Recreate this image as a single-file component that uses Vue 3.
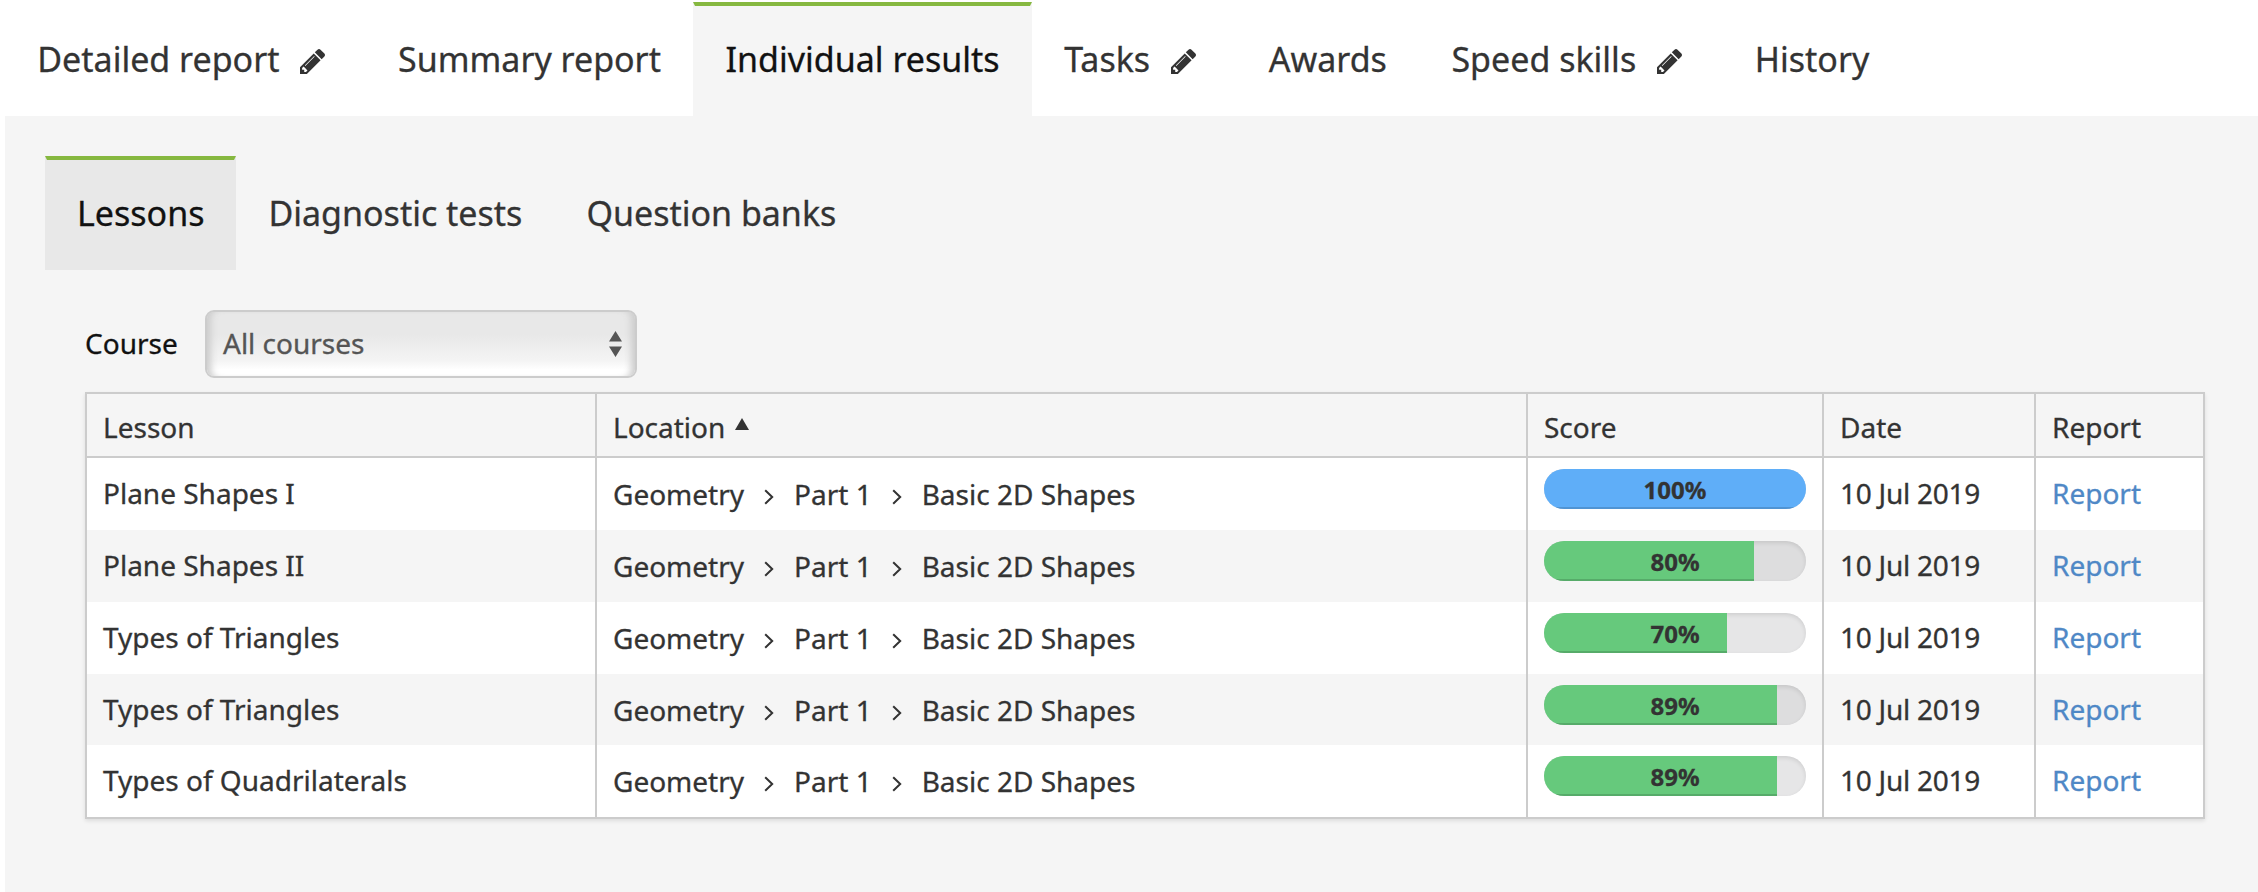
<template>
  <div class="page">
    <nav class="tabs main-tabs">
      <a v-for="tab in tabs" :key="tab.name" class="tab" :class="{ active: tab.active }">
        {{ tab.name }}
        <svg v-if="tab.editable" class="pencil" viewBox="128 149 1515 1515">
          <path
            d="M491 1536l91-91-235-235-91 91v107h128v128h107zM1014 608q0-22-22-22-10 0-17 7l-542 542q-7 7-7 17 0 22 22 22 10 0 17-7l542-542q7-7 7-17zM960 416l416 416-832 832h-416v-416zM1643 512q0 53-37 90l-166 166-416-416 166-165q36-38 90-38 53 0 91 38l235 234q37 39 37 91z"
          />
        </svg>
      </a>
    </nav>

    <section class="panel">
      <nav class="tabs">
        <a v-for="tab in subTabs" :key="tab.name" class="tab" :class="{ active: tab.active }">{{ tab.name }}</a>
      </nav>

      <div class="results">
        <div class="filter">
          <span class="filter-label">Course</span>
          <div class="select">
            <span class="select-value">All courses</span>
            <svg class="arrows" viewBox="0 0 13 26">
              <path d="M6.5 0L13 10.5H0zM0 15.5h13L6.5 26z" />
            </svg>
          </div>
        </div>

        <table class="table">
          <colgroup>
            <col class="col-lesson" />
            <col class="col-location" />
            <col class="col-score" />
            <col class="col-date" />
            <col class="col-report" />
          </colgroup>
          <thead>
            <tr>
              <th>Lesson</th>
              <th>Location<svg class="sort" viewBox="0 0 14 12"><path d="M7 0l7 12H0z" /></svg></th>
              <th>Score</th>
              <th>Date</th>
              <th>Report</th>
            </tr>
          </thead>
          <tbody>
            <tr v-for="(row, i) in rows" :key="i">
              <td>{{ row.lesson }}</td>
              <td>
                <div class="location">
                  <template v-for="(part, j) in row.location" :key="j">
                    <svg v-if="j > 0" class="chevron" viewBox="0 0 10 16">
                      <path d="M1.2 1.2L8.2 8l-7 6.8" />
                    </svg>
                    <span>{{ part }}</span>
                  </template>
                </div>
              </td>
              <td>
                <div class="score">
                  <div class="bar" :class="{ full: row.score === 100 }" :style="{ width: row.score + '%' }"></div>
                  <span class="score-text">{{ row.score }}%</span>
                </div>
              </td>
              <td class="date">{{ row.date }}</td>
              <td><a class="link">Report</a></td>
            </tr>
          </tbody>
        </table>
      </div>
    </section>
  </div>
</template>

<script setup>
import { ref } from 'vue';

const tabs = ref([
  { name: 'Detailed report', editable: true },
  { name: 'Summary report' },
  { name: 'Individual results', active: true },
  { name: 'Tasks', editable: true },
  { name: 'Awards' },
  { name: 'Speed skills', editable: true },
  { name: 'History' },
]);

const subTabs = ref([
  { name: 'Lessons', active: true },
  { name: 'Diagnostic tests' },
  { name: 'Question banks' },
]);

const location = ['Geometry', 'Part 1', 'Basic 2D Shapes'];

const rows = ref([
  { lesson: 'Plane Shapes I', location, score: 100, date: '10 Jul 2019' },
  { lesson: 'Plane Shapes II', location, score: 80, date: '10 Jul 2019' },
  { lesson: 'Types of Triangles', location, score: 70, date: '10 Jul 2019' },
  { lesson: 'Types of Triangles', location, score: 89, date: '10 Jul 2019' },
  { lesson: 'Types of Quadrilaterals', location, score: 89, date: '10 Jul 2019' },
]);
</script>

<style>
body {
  margin: 0;
  background: #fff;
}
</style>

<style scoped>
.page {
  box-sizing: border-box;
  height: 892px;
  padding: 2px 0 0 5px;
  display: flex;
  flex-direction: column;
  overflow: hidden;
  font-family: 'Noto Sans', sans-serif;
  font-size: 28px;
  color: #333;
  -webkit-text-stroke: 0.3px;
}

.tabs {
  display: flex;
}

.tab {
  box-sizing: border-box;
  display: flex;
  align-items: center;
  height: 114px;
  padding: 0 30px 4px;
  border: 2px solid transparent;
  border-top-width: 4px;
  border-bottom: 0;
  font-size: 34px;
  white-space: nowrap;
}

.main-tabs .tab {
  padding: 0 30.3px 4px;
}

.tab.active {
  color: #111;
  background: #f5f5f5;
  border-top-color: #86b840;
}

.pencil {
  width: 25px;
  height: 25px;
  margin: 5px 8px 0 21px;
  fill: #333;
}

.panel {
  flex: 1;
  padding: 40px 53px 0 40px;
  background: #f5f5f5;
}

.panel .tab.active {
  background: #e8e8e8;
}

.results {
  padding: 40px 0 0 40px;
}

.filter {
  display: flex;
  align-items: center;
  height: 68px;
  margin-bottom: 14px;
}

.filter-label {
  width: 120px;
  padding-bottom: 2px;
  color: #111;
}

.select {
  box-sizing: border-box;
  display: flex;
  align-items: center;
  justify-content: space-between;
  width: 432px;
  height: 68px;
  padding: 0 13px 0 16px;
  border: 2px solid #ccc;
  border-radius: 9px;
  color: #555;
  background: linear-gradient(#e8e8e8 35%, #f4f4f4 76%, #fff 90%);
  box-shadow: inset 9px 0 7px -5px #ccc, inset -9px 0 7px -5px #ccc;
}

.select-value {
  padding-bottom: 2px;
}

.arrows {
  width: 13px;
  height: 26px;
  fill: #555;
}

.table {
  table-layout: fixed;
  width: 2120px;
  border: 2px solid #ccc;
  border-spacing: 0;
  box-shadow: 0 2px 4px rgba(0, 0, 0, 0.1);
}

.col-lesson {
  width: 508px;
}

.col-location {
  width: 931px;
}

.col-score {
  width: 296px;
}

.col-date {
  width: 212px;
}

.col-report {
  width: 169px;
}

th,
td {
  box-sizing: border-box;
  padding: 0 16px;
  text-align: left;
  font-weight: normal;
  white-space: nowrap;
  vertical-align: top;
}

th + th,
td + td {
  border-left: 2px solid #ccc;
}

th {
  height: 64px;
  padding-top: 4px;
  border-bottom: 2px solid #ccc;
  line-height: 58px;
}

td {
  height: 72px;
  line-height: 70px;
}

tbody tr:nth-child(4) td {
  height: 71px;
}

tbody tr {
  background: #fff;
}

tbody tr:nth-child(even) {
  background: #f5f5f5;
}

.sort {
  width: 14px;
  height: 12px;
  margin-left: 10px;
  vertical-align: 8px;
  fill: #333;
}

.location {
  display: flex;
  align-items: center;
  padding-top: 1px;
}

.chevron {
  width: 10px;
  height: 16px;
  margin: 5px 20px 0 20px;
  fill: none;
  stroke: #333;
  stroke-width: 2;
}

.score {
  position: relative;
  height: 40px;
  margin-top: 11px;
  border-radius: 20px;
  overflow: hidden;
  background: rgba(10, 10, 20, 0.1);
  box-shadow: inset 0 2px 4px rgba(0, 0, 0, 0.1);
}

.bar {
  height: 40px;
  background: #66c97c;
  box-shadow: inset 0 -2px 0 rgba(0, 0, 0, 0.15);
}

.bar.full {
  background: #5faef8;
}

.score-text {
  position: absolute;
  inset: 0;
  text-align: center;
  font-size: 24px;
  font-weight: bold;
  line-height: 42px;
}

.date {
  letter-spacing: -0.25px;
}

.link {
  color: #4f88c6;
}
</style>
